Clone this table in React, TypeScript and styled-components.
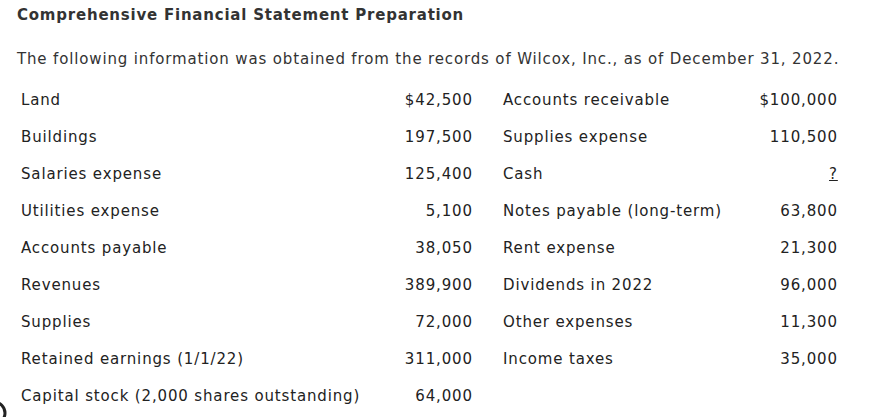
import styled, { createGlobalStyle } from 'styled-components'

const GlobalStyle = createGlobalStyle`
  html, body {
    margin: 0;
    padding: 0;
    background: #ffffff;
  }
  body {
    font-family: 'DejaVu Sans', Verdana, sans-serif;
    color: #222222;
    overflow: hidden;
  }
`

interface IRow {
  label: string
  value: string
  label2?: string
  value2?: string
  unknown?: boolean
}

const rows: IRow[] = [
  { label: 'Land', value: '$42,500', label2: 'Accounts receivable', value2: '$100,000' },
  { label: 'Buildings', value: '197,500', label2: 'Supplies expense', value2: '110,500' },
  { label: 'Salaries expense', value: '125,400', label2: 'Cash', value2: '?', unknown: true },
  { label: 'Utilities expense', value: '5,100', label2: 'Notes payable (long-term)', value2: '63,800' },
  { label: 'Accounts payable', value: '38,050', label2: 'Rent expense', value2: '21,300' },
  { label: 'Revenues', value: '389,900', label2: 'Dividends in 2022', value2: '96,000' },
  { label: 'Supplies', value: '72,000', label2: 'Other expenses', value2: '11,300' },
  { label: 'Retained earnings (1/1/22)', value: '311,000', label2: 'Income taxes', value2: '35,000' },
  { label: 'Capital stock (2,000 shares outstanding)', value: '64,000' },
]

const App = () => {
  return (
    <Page>
      <GlobalStyle />
      <Title>Comprehensive Financial Statement Preparation</Title>
      <Intro>
        The following information was obtained from the records of Wilcox, Inc., as of December 31, 2022.
      </Intro>
      <Table>
        {rows.map((row) => (
          <Row key={row.label}>
            <Cell>{row.label}</Cell>
            <Cell $right>{row.value}</Cell>
            <Cell $gap>{row.label2 ?? ''}</Cell>
            <Cell $right>{row.unknown ? <Unknown>{row.value2}</Unknown> : row.value2 ?? ''}</Cell>
          </Row>
        ))}
      </Table>
      <Corner>
        <svg width="12" height="24" viewBox="0 0 12 24">
          <circle cx="-6" cy="18" r="11" fill="none" stroke="#222" strokeWidth="3" />
        </svg>
      </Corner>
    </Page>
  )
}

export default App

const Page = styled.div`
  position: relative;
  width: 888px;
  height: 417px;
  padding: 6px 0 0 17px;
  box-sizing: border-box;
`

const Title = styled.h3`
  margin: 0;
  font-size: 15px;
  line-height: 18px;
  font-weight: bold;
  letter-spacing: 0.78px;
  color: #333333;
`

const Intro = styled.p`
  margin: 26px 0 0 0;
  font-size: 15px;
  line-height: 18px;
  letter-spacing: 0.85px;
  color: #333333;
`

const Table = styled.div`
  display: flex;
  flex-direction: column;
  margin: 13px 0 0 4px;
`

const Row = styled.div`
  display: grid;
  grid-template-columns: 360px 91px 261px 104px;
  height: 37.1px;
  align-items: center;
`

const Cell = styled.div<{ $right?: boolean; $gap?: boolean }>`
  font-size: 15px;
  line-height: 18px;
  letter-spacing: 0.85px;
  white-space: nowrap;
  text-align: ${({ $right }) => ($right ? 'right' : 'left')};
  padding-left: ${({ $gap }) => ($gap ? '31px' : '0')};
  margin-right: ${({ $right }) => ($right ? '-0.85px' : '0')};
`

const Unknown = styled.span`
  text-decoration: underline;
`

const Corner = styled.div`
  position: absolute;
  left: 0;
  top: 395px;
  line-height: 0;
`
